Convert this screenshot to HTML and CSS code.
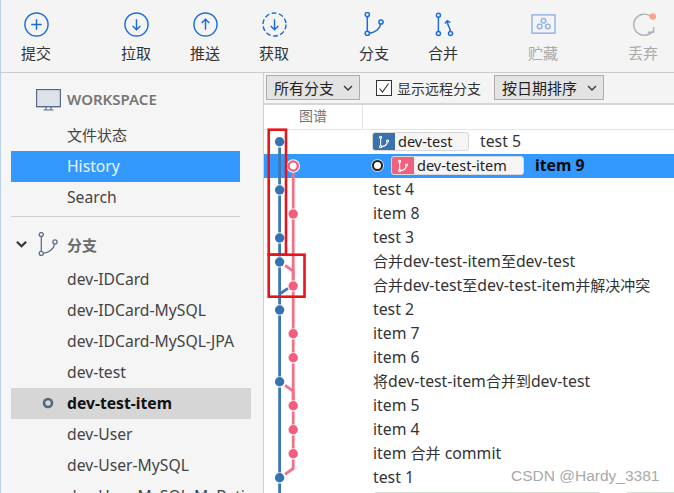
FILE: index.html
```html
<!DOCTYPE html>
<html lang="zh">
<head>
<meta charset="utf-8">
<title>History</title>
<link rel="stylesheet" href="styles.css">
</head>
<body>
<svg class="defs" width="0" height="0" aria-hidden="true">
  <symbol id="branch" viewBox="0 0 20 24">
    <circle cx="3.3" cy="2.6" r="2.1"/><circle cx="3.3" cy="21.4" r="2.1"/><circle cx="17" cy="10" r="2.1"/>
    <path d="M3.3 4.7V19.3M5.4 21.2C11 20.5 15.8 17 16.6 12.1"/>
  </symbol>
</svg>
<div class="app">
  <header class="toolbar">
    <div class="tool">
      <svg class="ticon" viewBox="0 0 26 26"><circle cx="13" cy="13" r="12"/><path d="M13 7.5v11M7.5 13h11"/></svg>
      <span>提交</span>
    </div>
    <div class="tool group">
      <svg class="ticon" viewBox="0 0 26 26"><circle cx="13" cy="13" r="12"/><path d="M13 7.5v11M9 14.5l4 4 4-4"/></svg>
      <span>拉取</span>
    </div>
    <div class="tool">
      <svg class="ticon" viewBox="0 0 26 26"><circle cx="13" cy="13" r="12"/><path d="M13 18.5v-11M9 11.5l4-4 4 4"/></svg>
      <span>推送</span>
    </div>
    <div class="tool">
      <svg class="ticon" viewBox="0 0 26 26"><circle cx="13" cy="13" r="12" stroke-dasharray="5 2.6"/><path d="M13 7.5v11M9 14.5l4 4 4-4"/></svg>
      <span>获取</span>
    </div>
    <div class="tool group">
      <svg class="ticon branchicon"><use href="#branch"/></svg>
      <span>分支</span>
    </div>
    <div class="tool">
      <svg class="ticon" viewBox="0 0 26 26"><circle cx="7.7" cy="3.3" r="2.1"/><circle cx="7.7" cy="22.3" r="2.1"/><circle cx="20.3" cy="22.3" r="2.1"/><path d="M7.7 5.4v14.8M20 19.8C20 15.5 16.5 14 17 9.5M14.5 12l2.5-3 3 2"/></svg>
      <span>合并</span>
    </div>
    <div class="tool group off">
      <svg class="ticon stash" viewBox="0 0 26 26"><rect x="1" y="3" width="24" height="19"/><circle cx="13" cy="9" r="2.4"/><circle cx="9" cy="15" r="2.4"/><circle cx="17.5" cy="15" r="2.4"/></svg>
      <span>贮藏</span>
    </div>
    <div class="tool group off">
      <svg class="ticon discard" viewBox="0 0 26 26"><path d="M20.5 4.5A11 11 0 1 0 22.5 20M23.5 15.5v5.5h-6"/><circle class="dot" cx="22.7" cy="4.7" r="3.4"/></svg>
      <span>丢弃</span>
    </div>
  </header>
  <div class="main">
    <aside class="sidebar">
      <div class="workspace">
        <svg class="monitor" viewBox="0 0 25 22"><rect x=".6" y=".6" width="23.8" height="17"/><path class="mline" d="M0 17.6h25M10 18v3M15 18v3M7.5 21h10"/></svg>
        <span>WORKSPACE</span>
      </div>
      <div class="nav zhnav">文件状态</div>
      <div class="nav active">History</div>
      <div class="nav">Search</div>
      <div class="divider"></div>
      <div class="section">
        <svg class="chev" viewBox="0 0 12 8"><path d="M1 1.5l5 5 5-5"/></svg>
        <svg class="sbranch"><use href="#branch"/></svg>
        <span>分支</span>
      </div>
      <div class="nav">dev-IDCard</div>
      <div class="nav">dev-IDCard-MySQL</div>
      <div class="nav">dev-IDCard-MySQL-JPA</div>
      <div class="nav">dev-test</div>
      <div class="nav current">
        <svg class="curdot" viewBox="0 0 12 12"><circle cx="6" cy="6" r="4"/></svg>dev-test-item
      </div>
      <div class="nav">dev-User</div>
      <div class="nav">dev-User-MySQL</div>
      <div class="nav">dev-User-MySQL-MyBatis</div>
    </aside>
    <section class="pane">
      <div class="filters">
        <div class="select first">所有分支<svg class="caret" viewBox="0 0 10 6"><path d="M1 1l4 4 4-4"/></svg></div>
        <label class="check"><span class="box"><svg viewBox="0 0 14 14"><path d="M2.5 7.5l3 3.5 6-8.5"/></svg></span>显示远程分支</label>
        <div class="select sort">按日期排序<svg class="caret" viewBox="0 0 10 6"><path d="M1 1l4 4 4-4"/></svg></div>
      </div>
      <div class="colhead"><div class="graphhead">图谱</div><div class="deschead"></div></div>
      <div class="commits">
        <div class="row"><span class="tag"><span class="tagicon blue"><svg><use href="#branch"/></svg></span><span class="tagname w-a">dev-test</span></span><span class="msg after">test 5</span></div>
        <div class="row selected"><span class="head"></span><span class="tag"><span class="tagicon pink"><svg><use href="#branch"/></svg></span><span class="tagname w-b">dev-test-item</span></span><b class="msg after-b">item 9</b></div>
        <div class="row"><span class="msg">test 4</span></div>
        <div class="row"><span class="msg">item 8</span></div>
        <div class="row"><span class="msg">test 3</span></div>
        <div class="row"><span class="msg"><span class="zh">合并</span>dev-test-item<span class="zh">至</span>dev-test</span></div>
        <div class="row"><span class="msg"><span class="zh">合并</span>dev-test<span class="zh">至</span>dev-test-item<span class="zh">并解决冲突</span></span></div>
        <div class="row"><span class="msg">test 2</span></div>
        <div class="row"><span class="msg">item 7</span></div>
        <div class="row"><span class="msg">item 6</span></div>
        <div class="row"><span class="msg"><span class="zh">将</span>dev-test-item<span class="zh">合并到</span>dev-test</span></div>
        <div class="row"><span class="msg">item 5</span></div>
        <div class="row"><span class="msg">item 4</span></div>
        <div class="row"><span class="msg">item <span class="zh">合并</span> commit</span></div>
        <div class="row"><span class="msg">test 1</span></div>
        <div class="row"><span class="ghost long"></span><span class="ghost short"></span></div>
        <svg class="graph" viewBox="264 130 110 363" width="110" height="363">
          <g class="bl">
            <path d="M279.6 147.5V184.5M279.6 195.5V232.5M279.6 243.5V256.5M279.6 267.5V304.5M279.6 315.5V376.5M279.6 387.5V472.5M279.6 483.5V493"/>
            <path d="M279.6 294L288 288.3"/>
          </g>
          <g class="pk">
            <path d="M293.2 173V208.5M293.2 219.5V280.5M293.2 291.5V328.5M293.2 339.5V352.5M293.2 363.5V400.5M293.2 411.5V424.5M293.2 435.5V448.5"/>
            <path d="M285 265.3L293.2 271V280M285 385.3L293.2 391V400M293.2 459.5V468.5L285 474.3"/>
          </g>
          <g class="bd">
            <circle cx="279.6" cy="141.7" r="4.7"/><circle cx="279.6" cy="190" r="4.7"/><circle cx="279.6" cy="238" r="4.7"/><circle cx="279.6" cy="262" r="4.7"/><circle cx="279.6" cy="310" r="4.7"/><circle cx="279.6" cy="381.8" r="4.7"/><circle cx="279.6" cy="477.8" r="4.7"/>
          </g>
          <g class="pd">
            <circle cx="293.2" cy="214" r="4.7"/><circle cx="293.2" cy="286" r="4.7"/><circle cx="293.2" cy="333.8" r="4.7"/><circle cx="293.2" cy="357.8" r="4.7"/><circle cx="293.2" cy="405.8" r="4.7"/><circle cx="293.2" cy="429.8" r="4.7"/><circle cx="293.2" cy="453.8" r="4.7"/>
          </g>
          <circle class="halo" cx="293.2" cy="166" r="6.8"/>
          <circle class="ring" cx="293.2" cy="166" r="4.6"/>
          <g class="marks">
            <rect x="268.7" y="129.7" width="17.3" height="125"/>
            <rect x="268.7" y="254.7" width="35.8" height="42"/>
          </g>
        </svg>
      </div>
    </section>
  </div>
</div>
<div class="watermark">CSDN @Hardy_3381</div>
</body>
</html>
```
FILE: styles.css
```css
* { box-sizing: border-box; }
html, body { margin: 0; padding: 0; width: 674px; height: 493px; overflow: hidden; }
body {
  position: relative;
  font-family: "Noto Sans", "Noto Sans CJK SC", sans-serif;
  font-size: 15px;
  color: #333;
  background: #f5f5f5;
}
.defs { position: absolute; }
.app { display: flex; flex-direction: column; height: 493px; border-left: 1px solid #bcd0e8; }

.toolbar { display: flex; height: 73px; flex: none; padding-left: .5px; background: #f4f4f4; border-bottom: 1px solid #cbcbcb; }
.tool { width: 69px; flex: none; display: flex; flex-direction: column; align-items: center; padding-top: 12px; }
.tool span { margin-top: 5px; font-size: 15px; line-height: 22px; color: #333; }
.tool.group { margin-left: 31px; }
.tool.off span { color: #aaa; }
.ticon { width: 25px; height: 25px; fill: none; stroke: #1c6bdc; stroke-width: 1.5; }
.branchicon { width: 20px; height: 24px; margin-bottom: 1px; }
.ticon.stash { stroke: #90b2ea; }
.ticon.discard { stroke: #aeb4ba; }
.ticon .dot { fill: #f9a191; stroke: none; }

.main { flex: 1; display: flex; min-height: 0; }
.sidebar { width: 263px; flex: none; padding: 0 0 0 10px; background: #f5f5f5; border-right: 1px solid #cfcfcf; overflow: hidden; }
.workspace { height: 47px; padding: 7px 0 1px 25px; display: flex; align-items: center; gap: 6px; font-size: 15px; font-weight: 600; color: #777; }
.workspace span { margin-top: -1px; }
.monitor { width: 25px; height: 22px; fill: #dde1ea; stroke: #5a6b87; stroke-width: 1.2; }
.mline { fill: none; }
.nav { height: 31px; line-height: 30px; padding-left: 56px; font-size: 15.7px; color: #444; width: 229px; white-space: nowrap; }
.nav.zhnav { font-size: 15px; }
.nav.active { background: #3399ff; color: #eaf4ff; }
.divider { width: 229px; height: 1px; margin-top: 3px; background: #cfcfcf; }
.section { height: 47px; display: flex; align-items: center; padding: 6px 0 0 5px; font-size: 15px; font-weight: 700; color: #6b6b6b; }
.chev { width: 11px; height: 8px; fill: none; stroke: #333; stroke-width: 2.4; }
.sbranch { width: 20px; height: 24px; margin-left: 11px; margin-right: 9px; fill: none; stroke: #5e6e8a; stroke-width: 1.3; }
.section span { margin-top: 2px; }
.nav.current { width: 240px; background: #d6d6d6; font-weight: 700; color: #111; position: relative; }
.curdot { position: absolute; left: 31px; top: 9px; width: 12px; height: 12px; fill: none; stroke: #56647f; stroke-width: 2.6; }

.pane { flex: 1; min-width: 0; background: #fff; overflow: hidden; display: flex; flex-direction: column; }
.filters { height: 32px; flex: none; display: flex; align-items: center; padding: 0 0 1px 2px; background: #f4f4f4; border-bottom: 2px solid #d5d5d5; }
.select { height: 25px; display: flex; align-items: center; justify-content: space-between; padding: 0 6px 0 7px; background: #e3e3e3; border: 1px solid #adadad; font-size: 15px; color: #222; }
.select.first { width: 94px; }
.select.sort { width: 110px; margin-left: 13px; }
.caret { width: 10px; height: 6px; fill: none; stroke: #333; stroke-width: 1.3; }
.check { display: flex; align-items: center; margin-left: 16px; font-size: 14px; color: #333; }
.box { width: 16px; height: 16px; margin-right: 5px; background: #fff; border: 1px solid #333; display: flex; }
.box svg { width: 14px; height: 14px; fill: none; stroke: #333; stroke-width: 1.1; }
.colhead { height: 25px; flex: none; display: flex; background: #fff; border-bottom: 1px solid #e4e4e4; }
.graphhead { width: 99px; text-align: center; font-size: 14px; line-height: 22px; color: #777; border-right: 1px solid #e4e4e4; }
.deschead { flex: 1; }

.commits { position: relative; }
.row { height: 24px; display: flex; align-items: center; padding-left: 109px; font-size: 15.8px; white-space: nowrap; color: #333; }
.row.selected { background: #3399ff; color: #0a0a0a; padding-left: 108px; }
.msg { line-height: 22px; margin-top: -2px; }
.zh { font-size: 15px; }
.msg.after { margin-left: 11px; }
.msg.after-b { margin-left: 11px; font-weight: 700; }
.tag { display: flex; height: 19px; border-radius: 3px; overflow: hidden; border: 1px solid #d8d8d8; background: #f5f5f5; margin: -1px 0 0 -1px; }
.tagicon { width: 23px; display: flex; align-items: center; justify-content: center; margin: -1px 0 -1px -1px; }
.tagicon svg { width: 10px; height: 14px; fill: none; stroke: #fff; stroke-width: 2.2; }
.tagicon.blue { background: #3a72ad; }
.tagicon.pink { background: #f1607c; }
.tagname { font-size: 14.5px; line-height: 17px; color: #222; padding-left: 3px; }
.tagname.w-a { width: 73px; }
.tagname.w-b { width: 109px; }
.head { width: 11px; height: 11px; margin: -1px 9px 0 0; border-radius: 50%; background: #fff; border: 2.5px solid #222; box-shadow: 0 0 0 1px #cfd6dd; flex: none; }
.ghost { height: 19px; align-self: flex-start; margin-top: 2px; background: #fff; border: 1px solid #d5ddd5; border-radius: 3px; flex: none; }
.ghost.long { width: 228px; }
.ghost.short { width: 60px; margin-left: 24px; }

.graph { position: absolute; left: 0; top: 0; overflow: visible; }
.bl { fill: none; stroke: #3d78b4; stroke-width: 2.8; }
.pk { fill: none; stroke: #f4708b; stroke-width: 2.8; }
.bd { fill: #3572b0; }
.pd { fill: #f25f7c; }
.halo { fill: #fff; }
.ring { fill: #fff; stroke: #f25f7c; stroke-width: 2.4; }
.marks { fill: none; stroke: #e8141c; stroke-width: 2.6; }

.watermark { position: absolute; left: 511px; top: 465px; font-family: "Liberation Sans", sans-serif; font-size: 15.5px; line-height: 22px; color: #a9a9a9; white-space: nowrap; }
```
